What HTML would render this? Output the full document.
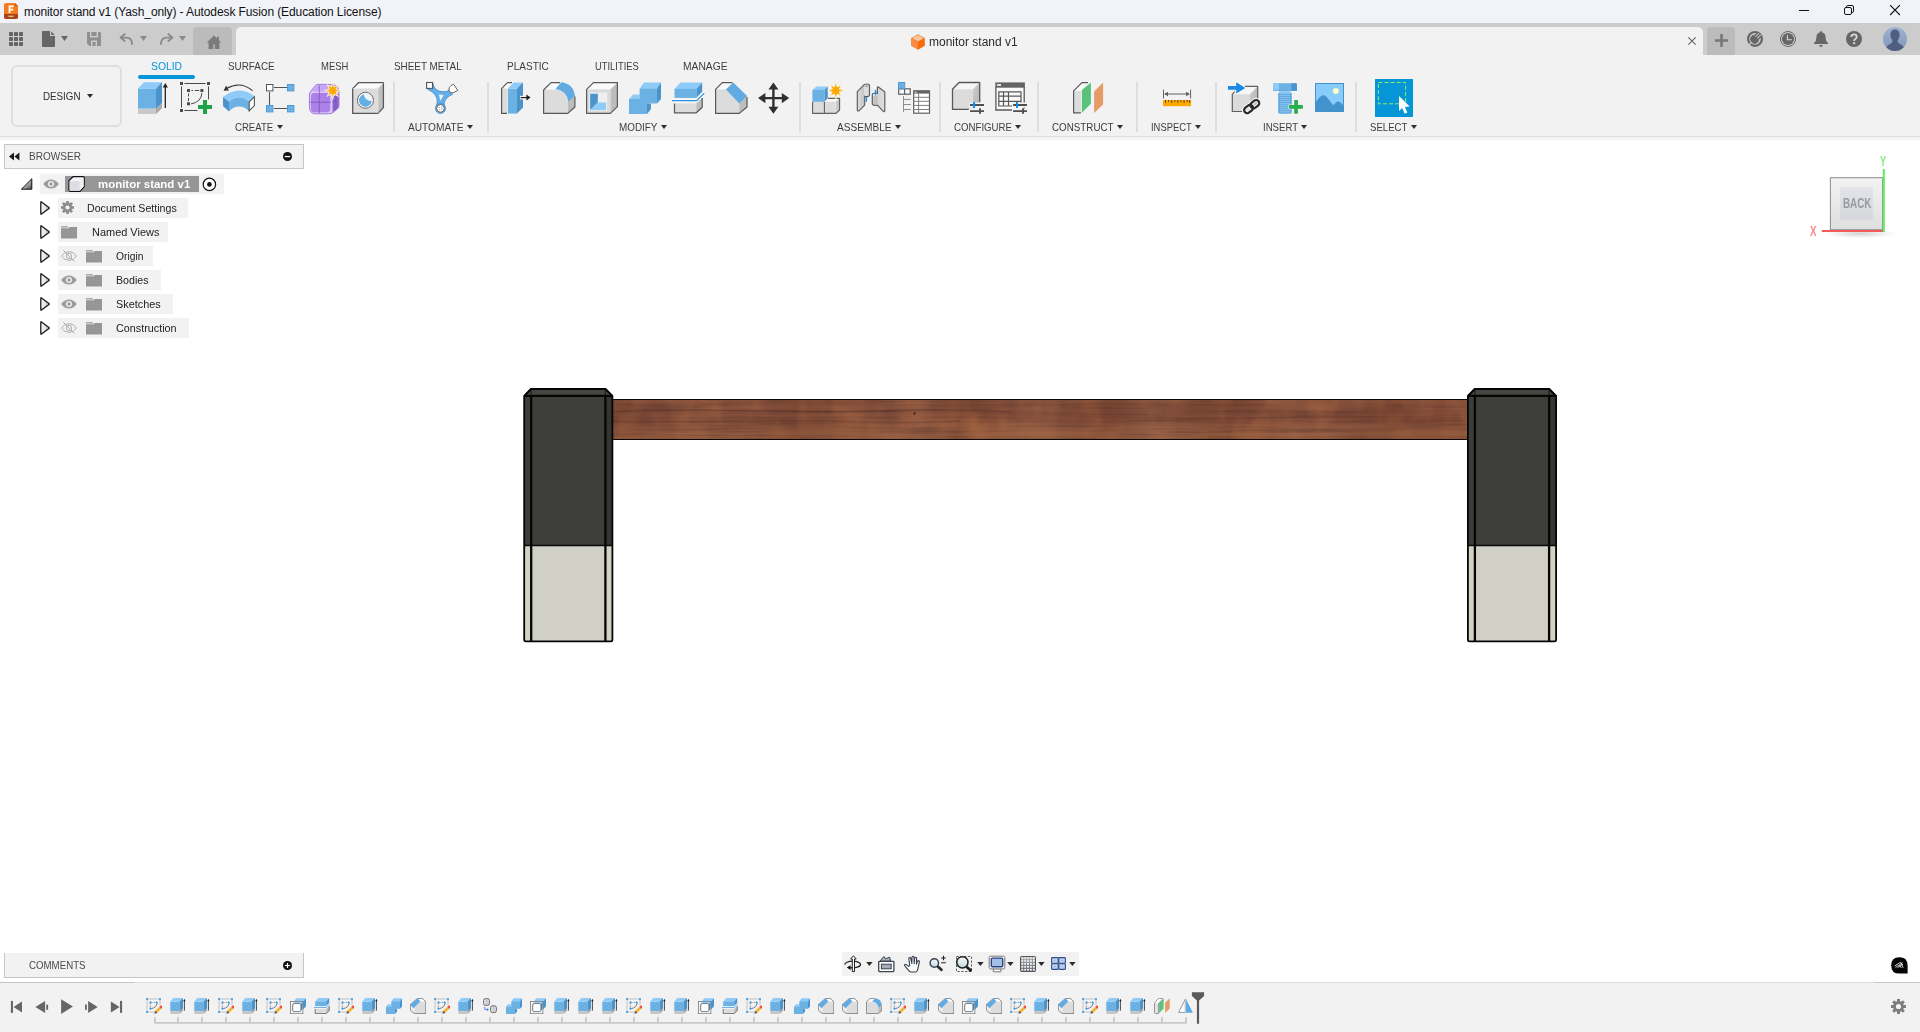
<!DOCTYPE html>
<html lang="en">
<head>
<meta charset="utf-8">
<title>monitor stand v1 - Autodesk Fusion</title>
<style>
*{box-sizing:border-box;margin:0;padding:0}
html,body{width:1920px;height:1032px;overflow:hidden;background:#fff}
body{position:relative;font-family:"Liberation Sans",sans-serif;color:#3c3c3c;-webkit-font-smoothing:antialiased}
.abs{position:absolute}
.t{position:absolute;white-space:nowrap;line-height:1;transform-origin:0 0}
svg{position:absolute;overflow:visible}
#titlebar{left:0;top:0;width:1920px;height:23px;background:#f1f3f9}
#band{left:0;top:23px;width:1920px;height:32px;background:#cccccc}
#toolbar{left:0;top:55px;width:1920px;height:81px;background:#f2f2f2}
#tbline{left:0;top:136px;width:1920px;height:1px;background:#dedede}
#tbsub{left:0;top:137px;width:1920px;height:3px;background:#f5f5f5}
#timeline{left:0;top:983px;width:1920px;height:49px;background:#f2f2f2}
#tlline{left:0;top:982px;width:1920px;height:1px;background:linear-gradient(to right,#c6c6c6 0,#c6c6c6 134px,#dcdcdc 134px,#dcdcdc 1875px,#c6c6c6 1875px)}
.tab{font-size:11px;top:61px;color:#3d3d3d}
.grp{font-size:11px;top:122px;color:#3d3d3d}
.sep{position:absolute;top:82px;width:2px;height:50px;background:#dedede}
.arr{position:absolute;width:0;height:0;border-left:3.2px solid transparent;border-right:3.2px solid transparent;border-top:4px solid #2e2e2e}
.row{position:absolute;height:20px;background:#f2f2f2}
.rt{font-size:11px;color:#2a2a2a}
</style>
</head>
<body>
<!-- window frame -->
<div id="titlebar" class="abs"></div>
<div id="band" class="abs"></div>
<div id="toolbar" class="abs"></div>
<div id="tbline" class="abs"></div>
<div id="tbsub" class="abs"></div>
<div id="tlline" class="abs"></div>
<div id="timeline" class="abs"></div>

<!-- title bar -->
<svg style="left:4px;top:3px" width="14" height="16" viewBox="0 0 14 16">
  <path d="M2 0 H11 L14 3 V14 Q14 16 12 16 H2 Q0 16 0 14 V2 Q0 0 2 0Z" fill="#f47a1c"/>
  <path d="M0 11 H14 V14 Q14 16 12 16 H2 Q0 16 0 14Z" fill="#a4461a"/>
  <path d="M11 0 L14 3 H11Z" fill="#c85a18"/>
  <path d="M4.6 2.6 H9.6 V4.2 H6.4 V5.8 H9.2 V7.4 H6.4 V10 H4.6Z" fill="#fff"/>
  <rect x="4.5" y="12.6" width="5" height="1.5" fill="#e8b48c"/>
</svg>
<div class="t" id="title" style="left:24px;top:6px;font-size:12px;color:#111;letter-spacing:-0.1px">monitor stand v1 (Yash_only) - Autodesk Fusion (Education License)</div>
<!-- window controls -->
<svg style="left:1798px;top:4px" width="110" height="14" viewBox="0 0 110 14">
  <path d="M1 6.5 H11" stroke="#111" stroke-width="1" fill="none"/>
  <rect x="46.5" y="3.5" width="7" height="7" rx="1.5" fill="none" stroke="#111" stroke-width="1"/>
  <path d="M48.5 3.3 V2.8 Q48.5 1.5 49.8 1.5 H54 Q55.5 1.5 55.5 3 V7.2 Q55.5 8.5 54.2 8.5 H53.8" fill="none" stroke="#111" stroke-width="1"/>
  <path d="M92.1 1.2 L101.9 11 M101.9 1.2 L92.1 11" stroke="#111" stroke-width="1.1" fill="none"/>
</svg>
<!-- quick access band -->
<svg style="left:9px;top:32px" width="14" height="14" viewBox="0 0 14 14" fill="#646464">
  <rect x="0" y="0" width="4" height="4" rx=".7"/><rect x="5" y="0" width="4" height="4" rx=".7"/><rect x="10" y="0" width="4" height="4" rx=".7"/>
  <rect x="0" y="5" width="4" height="4" rx=".7"/><rect x="5" y="5" width="4" height="4" rx=".7"/><rect x="10" y="5" width="4" height="4" rx=".7"/>
  <rect x="0" y="10" width="4" height="4" rx=".7"/><rect x="5" y="10" width="4" height="4" rx=".7"/><rect x="10" y="10" width="4" height="4" rx=".7"/>
</svg>
<svg style="left:42px;top:31px" width="13" height="16" viewBox="0 0 13 16">
  <path d="M1 0 H8 V5 H13 V15 Q13 16 12 16 H1 Q0 16 0 15 V1 Q0 0 1 0Z" fill="#666"/>
  <path d="M9.2 0.3 L12.7 3.9 H9.2Z" fill="#666"/>
</svg>
<svg style="left:61px;top:36px" width="7" height="5" viewBox="0 0 7 5"><path d="M0 0 H7 L3.5 5Z" fill="#666"/></svg>
<svg style="left:87px;top:32px" width="14" height="14" viewBox="0 0 14 14">
  <path d="M1 0 H13 Q14 0 14 1 V13 Q14 14 13 14 H2.4 L0 11.6 V1 Q0 0 1 0Z" fill="#909090"/>
  <path d="M3 0 H11 V5.4 H3Z" fill="#ccc"/>
  <rect x="4.4" y="0" width="5.2" height="4" fill="#909090"/>
  <path d="M4 14 V8.6 H10 V14 H8.6 V10 H5.4 V14Z" fill="#ccc"/>
</svg>
<svg style="left:119px;top:33px" width="16" height="13" viewBox="0 0 16 13" fill="none" stroke="#8a8a8a" stroke-width="1.9" stroke-linejoin="round">
  <path d="M6.2 0.8 L1.6 4.6 L6.2 8.4"/>
  <path d="M2 4.6 H7.5 Q13 4.6 13.2 11.8"/>
</svg>
<svg style="left:140px;top:36px" width="7" height="5" viewBox="0 0 7 5"><path d="M0 0 H7 L3.5 5Z" fill="#8a8a8a"/></svg>
<svg style="left:158px;top:33px" width="16" height="13" viewBox="0 0 16 13" fill="none" stroke="#8a8a8a" stroke-width="1.9" stroke-linejoin="round">
  <path d="M9.8 0.8 L14.4 4.6 L9.8 8.4"/>
  <path d="M14 4.6 H8.5 Q3 4.6 2.8 11.8"/>
</svg>
<svg style="left:179px;top:36px" width="7" height="5" viewBox="0 0 7 5"><path d="M0 0 H7 L3.5 5Z" fill="#8a8a8a"/></svg>
<!-- home tab -->
<div class="abs" style="left:193px;top:27px;width:39px;height:28px;background:#bbbbbb;border-radius:4px 4px 0 0"></div>
<svg style="left:206px;top:35px" width="16" height="14" viewBox="0 0 16 14">
  <path d="M8 0.6 L15.2 7.4 H13.4 V14 H2.6 V7.4 H0.8Z" fill="#7b7b7b"/>
  <rect x="11" y="1.6" width="1.8" height="4" fill="#7b7b7b"/>
  <rect x="6.9" y="9.4" width="2.2" height="4.6" fill="#a9a9a9"/>
</svg>
<!-- active document tab -->
<div class="abs" style="left:236px;top:27px;width:1467px;height:28px;background:#f2f2f2;border-radius:5px 5px 0 0"></div>
<svg style="left:911px;top:34px" width="14" height="16" viewBox="0 0 14 16">
  <path d="M7 0.3 L13.8 3.9 V11.7 L7 15.7 L0.2 11.7 V3.9Z" fill="#e07828"/>
  <path d="M7 0.9 L13 4.1 L7 7.5 L1 4.1Z" fill="#ffc49c"/>
  <path d="M0.8 4.6 L6.7 8 V14.9 L0.8 11.4Z" fill="#ff8c3e"/>
  <path d="M13.2 4.6 L7.3 8 V14.9 L13.2 11.4Z" fill="#ff6a06"/>
</svg>
<div class="t" style="left:928.9px;top:35.5px;font-size:12.5px;color:#2c2c2c;transform:scaleX(0.960)">monitor stand v1</div>
<svg style="left:1688px;top:37px" width="8" height="8" viewBox="0 0 8 8"><path d="M0.3 0.3 L7.7 7.7 M7.7 0.3 L0.3 7.7" stroke="#6a6a6a" stroke-width="1.2"/></svg>
<!-- plus tab -->
<div class="abs" style="left:1707px;top:27px;width:28px;height:28px;background:#bbbbbb;border-radius:4px 4px 0 0"></div>
<svg style="left:1715px;top:34px" width="13" height="13" viewBox="0 0 13 13"><path d="M6.5 0 V13 M0 6.5 H13" stroke="#777" stroke-width="2.6"/></svg>
<!-- right icons -->
<svg style="left:1747px;top:31px" width="16" height="16" viewBox="0 0 16 16">
  <circle cx="8" cy="7.9" r="6.9" fill="none" stroke="#666" stroke-width="2.2"/>
  <g transform="translate(8 7.9) rotate(45)">
    <path d="M-4.3 -1.4 H4.3 V1.2 Q4.3 4.6 0 4.9 Q-4.3 4.6 -4.3 1.2Z" fill="#666"/>
    <rect x="-3.2" y="-6.6" width="6.4" height="5.6" fill="#666"/>
    <path d="M-1.2 -7 V-2 M1.2 -7 V-2" stroke="#ccc" stroke-width="0.95"/>
  </g>
  <path d="M4.7 11.3 L1.4 14.6" stroke="#ccc" stroke-width="1.3"/>
</svg>
<svg style="left:1780px;top:31px" width="16" height="16" viewBox="0 0 16 16">
  <circle cx="8" cy="8" r="7.5" fill="none" stroke="#666" stroke-width="1"/>
  <circle cx="8" cy="8" r="6" fill="#666"/>
  <path d="M7.4 4.2 V8.7 H11.8" fill="none" stroke="#dadada" stroke-width="1.1"/>
</svg>
<svg style="left:1814px;top:31px" width="14" height="16" viewBox="0 0 14 16">
  <path d="M7 0 Q8 0 8 1.2 Q11.6 2 11.6 6.4 Q11.6 10.4 14 12 V13 H0 V12 Q2.4 10.4 2.4 6.4 Q2.4 2 6 1.2 Q6 0 7 0Z" fill="#666"/>
  <path d="M5.2 14 H8.8 Q8.4 16 7 16 Q5.6 16 5.2 14Z" fill="#666"/>
</svg>
<svg style="left:1846px;top:31px" width="16" height="16" viewBox="0 0 16 16">
  <circle cx="8" cy="8" r="8" fill="#666"/>
  <path d="M5.3 6 Q5.3 3.4 8 3.4 Q10.7 3.4 10.7 5.8 Q10.7 7.2 9.2 8 Q8.2 8.6 8.2 10" fill="none" stroke="#d8d8d8" stroke-width="1.9"/>
  <rect x="7.2" y="11.2" width="2" height="2" fill="#d8d8d8"/>
</svg>
<svg style="left:1883px;top:27px" width="24" height="24" viewBox="0 0 24 24">
  <defs><clipPath id="avc"><circle cx="12" cy="12" r="12"/></clipPath>
  <linearGradient id="avg" x1="0" y1="0" x2="0" y2="1"><stop offset="0" stop-color="#9fb2d0"/><stop offset="1" stop-color="#8098bc"/></linearGradient></defs>
  <circle cx="12" cy="12" r="12" fill="url(#avg)"/>
  <g clip-path="url(#avc)" fill="#4f607e">
    <path d="M12 2.4 Q16.6 2.4 16.6 8 Q16.6 11.4 14.6 13.2 Q14.4 15.6 16 16.6 Q21 18.4 22 24 H2 Q3 18.4 8 16.6 Q9.6 15.6 9.4 13.2 Q7.4 11.4 7.4 8 Q7.4 2.4 12 2.4Z"/>
  </g>
</svg>
<!-- DESIGN workspace button -->
<div class="abs" style="left:11px;top:65px;width:111px;height:62px;border:2px solid #dedede;border-radius:6px;background:#f2f2f2"></div>
<div class="t" style="left:43.3px;top:90.5px;font-size:11.3px;color:#2e2e2e;transform:scaleX(0.866)">DESIGN</div>
<div class="arr" style="left:86.8px;top:94px"></div>
<!-- tabs -->
<div class="t" style="left:151.3px;top:61.0px;font-size:11px;color:#0696d7;transform:scaleX(0.939)">SOLID</div>
<div class="t" style="left:228.3px;top:61.0px;font-size:11px;color:#3d3d3d;transform:scaleX(0.897)">SURFACE</div>
<div class="t" style="left:321.2px;top:61.0px;font-size:11px;color:#3d3d3d;transform:scaleX(0.862)">MESH</div>
<div class="t" style="left:394.2px;top:61.0px;font-size:11px;color:#3d3d3d;transform:scaleX(0.898)">SHEET METAL</div>
<div class="t" style="left:507.0px;top:61.0px;font-size:11px;color:#3d3d3d;transform:scaleX(0.912)">PLASTIC</div>
<div class="t" style="left:595.0px;top:61.0px;font-size:11px;color:#3d3d3d;transform:scaleX(0.853)">UTILITIES</div>
<div class="t" style="left:683.0px;top:61.0px;font-size:11px;color:#3d3d3d;transform:scaleX(0.935)">MANAGE</div>
<div class="abs" style="left:138px;top:75px;width:57px;height:4px;background:#0696d7;border-radius:2px"></div>
<!-- group labels -->
<div class="t" style="left:234.5px;top:122.0px;font-size:11px;color:#3d3d3d;transform:scaleX(0.872)">CREATE</div>
<div class="arr" style="left:276.5px;top:124.5px"></div>
<div class="t" style="left:408.4px;top:122.0px;font-size:11px;color:#3d3d3d;transform:scaleX(0.923)">AUTOMATE</div>
<div class="arr" style="left:466.5px;top:124.5px"></div>
<div class="t" style="left:619.0px;top:122.0px;font-size:11px;color:#3d3d3d;transform:scaleX(0.898)">MODIFY</div>
<div class="arr" style="left:660.5px;top:124.5px"></div>
<div class="t" style="left:837.0px;top:122.0px;font-size:11px;color:#3d3d3d;transform:scaleX(0.921)">ASSEMBLE</div>
<div class="arr" style="left:894.5px;top:124.5px"></div>
<div class="t" style="left:953.9px;top:122.0px;font-size:11px;color:#3d3d3d;transform:scaleX(0.879)">CONFIGURE</div>
<div class="arr" style="left:1014.5px;top:124.5px"></div>
<div class="t" style="left:1052.3px;top:122.0px;font-size:11px;color:#3d3d3d;transform:scaleX(0.891)">CONSTRUCT</div>
<div class="arr" style="left:1116.5px;top:124.5px"></div>
<div class="t" style="left:1151.3px;top:122.0px;font-size:11px;color:#3d3d3d;transform:scaleX(0.854)">INSPECT</div>
<div class="arr" style="left:1194.5px;top:124.5px"></div>
<div class="t" style="left:1263.3px;top:122.0px;font-size:11px;color:#3d3d3d;transform:scaleX(0.872)">INSERT</div>
<div class="arr" style="left:1300.5px;top:124.5px"></div>
<div class="t" style="left:1370.4px;top:122.0px;font-size:11px;color:#3d3d3d;transform:scaleX(0.874)">SELECT</div>
<div class="arr" style="left:1410.5px;top:124.5px"></div>
<!-- separators -->
<div class="sep" style="left:393px"></div>
<div class="sep" style="left:487px"></div>
<div class="sep" style="left:799px"></div>
<div class="sep" style="left:939px"></div>
<div class="sep" style="left:1037px"></div>
<div class="sep" style="left:1136px"></div>
<div class="sep" style="left:1215px"></div>
<div class="sep" style="left:1355px"></div>
<!-- ===== toolbar icons: CREATE ===== -->
<svg style="left:138px;top:82px" width="32" height="32" viewBox="0 0 32 32">
  <path d="M0 26.5 H18 V32 H0Z" fill="#c9c9c9"/><path d="M18 26.5 L24 21 V26.2 L18 32Z" fill="#a9a9a9"/>
  <path d="M0 6.5 H18 V26.5 H0Z" fill="#6bb1e4"/>
  <path d="M0 6.5 L6 0.3 H24 L18 6.5Z" fill="#8ecbf8"/>
  <path d="M18 6.5 L24 0.3 V21 L18 26.5Z" fill="#4a93cb"/>
  <path d="M27.3 4 V26" stroke="#222" stroke-width="1.3"/><path d="M24.7 5.6 L27.3 1 L29.9 5.6Z" fill="#222"/>
</svg>
<svg style="left:180px;top:82px" width="32" height="32" viewBox="0 0 32 32">
  <g fill="#4a4a4a"><rect x="0" y="0" width="3" height="3"/><rect x="27" y="0" width="3" height="3"/><rect x="0" y="27" width="3" height="3"/>
  <rect x="7" y="7" width="3" height="3"/><rect x="20.4" y="7" width="3" height="3"/><rect x="7" y="20.3" width="3" height="3"/></g>
  <g fill="none" stroke="#4a4a4a" stroke-width="1"><path d="M4.4 1.5 H25.6 M1.5 4.4 V25.6 M28.5 4.4 V17.4 M4.4 28.5 H17.4"/>
  <path d="M11.4 8.5 H13.2 M14.8 8.5 H19.2 M8.5 11.4 V14.4 M8.5 16 V19.2"/>
  <path d="M21.9 11 Q21.2 20.2 11 21.9"/></g>
  <path d="M23 18 H27 V23 H32 V27 H27 V32 H23 V27 H18 V23 H23Z" fill="#1fa347"/>
</svg>
<svg style="left:223px;top:82px" width="33" height="32" viewBox="0 0 33 32">
  <path d="M29.5 8.6 Q17 -1.5 3.5 6.6" fill="none" stroke="#333" stroke-width="1.2"/>
  <path d="M0.6 8.8 L3.2 3.6 L5.8 8.6Z" fill="#333"/>
  <path d="M0 15 Q8 8.4 16 8.4 Q25 8.4 31.6 14.4 L26 19.6 Q21 15.4 16 15.4 Q10.5 15.4 6 19.8Z" fill="#8ecbf8"/>
  <path d="M6 19.8 Q10.5 15.4 16 15.4 Q21 15.4 26 19.6 V29 Q21 24.6 16 24.6 Q10.5 24.6 6 29.6Z" fill="#6bb1e4"/>
  <path d="M0 15 L6 19.8 V29.6 L0 24Z" fill="#4a93cb"/>
  <path d="M26.2 19.8 L31.4 14.8 V23.6 L26.2 28.8Z" fill="#fff" stroke="#555" stroke-width="1.1"/>
</svg>
<svg style="left:266px;top:84px" width="29" height="29" viewBox="0 0 29 29">
  <path d="M8 3.5 H21 M3.5 8 V21 M8 24.5 H21" stroke="#555" stroke-width="1.1" fill="none"/>
  <rect x="0.5" y="0.5" width="6.4" height="6.4" fill="#fff" stroke="#555" stroke-width="1"/>
  <rect x="21.5" y="0.5" width="6.4" height="6.4" fill="#6bb1e4" stroke="#4f9ad4" stroke-width="1"/>
  <rect x="0.5" y="21.5" width="6.4" height="6.4" fill="#6bb1e4" stroke="#4f9ad4" stroke-width="1"/>
  <rect x="21.5" y="21.5" width="6.4" height="6.4" fill="#6bb1e4" stroke="#4f9ad4" stroke-width="1"/>
</svg>
<svg style="left:309px;top:82px" width="32" height="32" viewBox="0 0 32 32">
  <path d="M8.2 2.4 H22 Q30 2.4 30 10 V24 Q30 25.6 28.8 26.6 L24 30.6 Q22.4 31.8 20 31.8 H7 Q0.4 31.8 0.4 25 V13 Q0.4 10.6 2 9 L6 4 Q7 2.4 8.2 2.4Z" fill="#d9c6f8" stroke="#9a70d8" stroke-width="0.9"/>
  <path d="M3 8.6 L6.6 4.4 Q7.4 3.2 9 3.2 H22 Q28 3.2 29 8 L23 12 Q21.6 9.6 18 9.6 H6 Q4 9.6 3 8.6Z" fill="#c8a4fb"/>
  <path d="M23.6 15 L29.6 11.6 V24 Q29.6 25.4 28.6 26.2 L23.6 30.2Z" fill="#8a62cc"/>
  <rect x="2" y="11" width="19.2" height="19.2" rx="3.4" fill="#ab80e8"/>
  <path d="M10.3 3.4 V31.4 M0.8 20.2 H21.6 M23.6 20.2 L29.6 17.4 M26.8 13.4 V27.6" fill="none" stroke="#7a58b0" stroke-width="0.8"/>
  <path d="M23.7 -0.2 L25 5 L29.2 2.6 L27 7.1 L32 8.5 L27 9.9 L29.2 14.4 L25 12 L23.7 17.2 L22.4 12 L18.2 14.4 L20.4 9.9 L15.4 8.5 L20.4 7.1 L18.2 2.6 L22.4 5Z" fill="#ffa900" stroke="#f6f2ec" stroke-width="0.9" stroke-linejoin="round"/>
</svg>
<svg style="left:352px;top:82px" width="32" height="32" viewBox="0 0 32 32">
  <defs><clipPath id="hcl"><circle cx="13.45" cy="18.3" r="6.6"/></clipPath></defs>
  <path d="M0.7 6.6 L6.4 0.7 H31.4 L26 6.6Z" fill="#fafafa"/>
  <path d="M26 6.6 L31.4 0.7 V25.6 L26 31.4Z" fill="#c0c0c0"/>
  <path d="M0.7 6.6 H26 V31.4 H0.7Z" fill="#dcdcdc"/>
  <path d="M0.7 6.6 L6.4 0.7 H31.4 V25.6 L26 31.4 H0.7Z" fill="none" stroke="#585858" stroke-width="1.3" stroke-linejoin="round"/>
  <path d="M26 31.4 V6.6 H0.7 M26 6.6 L31.4 0.7" fill="none" stroke="#e9e9e9" stroke-width="0.6"/>
  <circle cx="13.45" cy="18.3" r="8" fill="#fff" stroke="#666" stroke-width="1"/>
  <g clip-path="url(#hcl)"><circle cx="13.45" cy="18.3" r="6.6" fill="#62aee6"/><circle cx="19" cy="11.5" r="7.4" fill="#f4f4f4"/></g>
</svg>
<!-- AUTOMATE -->
<svg style="left:426px;top:82px" width="33" height="32" viewBox="0 0 33 32">
  <path d="M1.6 7.2 L7 1.6 Q8.4 9.6 17.3 9.8 Q20.5 9.8 23 8.4 L26.6 12.3 Q20 14.8 18 21 L18.4 23 H10.6 L11.2 21 Q12.4 12 1.6 7.2Z" fill="#64b0ea" stroke="#4690ce" stroke-width="0.9" stroke-linejoin="round"/>
  <path d="M12.8 12.4 L17.7 13 L14.5 18.8Z" fill="#f2f2f2"/>
  <circle cx="14.5" cy="26.4" r="5.1" fill="#64b0ea" stroke="#4690ce" stroke-width="0.8"/>
  <circle cx="14.5" cy="26.4" r="3.9" fill="#fff" stroke="#5a5a5a" stroke-width="1"/>
  <circle cx="14.5" cy="26.4" r="1.7" fill="none" stroke="#777" stroke-width="0.7" stroke-dasharray="1.6 1"/>
  <rect x="0.6" y="0.5" width="5.9" height="5.9" fill="#fff" stroke="#555" stroke-width="1.1"/>
  <path d="M27.5 2.2 L31.8 8.4 L26.8 10.9 Q24 11.4 23 8.4 Q22.4 5.4 25 3.6Z" fill="#fff" stroke="#555" stroke-width="0.9" stroke-linejoin="round"/>
</svg>
<!-- ===== MODIFY ===== -->
<svg style="left:501px;top:82px" width="32" height="32" viewBox="0 0 32 32">
  <path d="M0.6 6.6 L6.4 0.6 H12 L6.6 6.6Z" fill="#fafafa"/>
  <path d="M0.6 6.6 H6.6 V31.4 H0.6Z" fill="#dcdcdc"/>
  <path d="M6 31.4 H0.6 V6.6 L6.4 0.6 H11" fill="none" stroke="#585858" stroke-width="1.2" stroke-linejoin="round"/>
  <path d="M7 6.6 H16 V31.6 H7Z" fill="#6bb1e4"/>
  <path d="M7 6.6 L12.6 0.4 H22 L16 6.6Z" fill="#8ecbf8"/>
  <path d="M16 6.6 L22 0.4 V25.4 L16 31.6Z" fill="#4a93cb"/>
  <path d="M19 13.8 H27 V17.4 H19Z" fill="#f2f2f2"/>
  <path d="M19.6 15.6 H27" stroke="#222" stroke-width="1.2"/><path d="M25.4 12.6 L29.6 15.6 L25.4 18.6Z" fill="#222"/>
</svg>
<svg style="left:543px;top:82px" width="33" height="32" viewBox="0 0 33 32">
  <path d="M0.6 8 L8 0.6 H18.3 L12.4 7.4 H0.6Z" fill="#fafafa"/>
  <path d="M0.6 7.8 H12.4 Q23.6 9 24.8 19.8 V31.4 H0.6Z" fill="#dcdcdc"/>
  <path d="M24.8 19.8 L31.9 13.9 V25 L24.8 31.4Z" fill="#bdbdbd"/>
  <path d="M12.4 7 L18.3 0.3 Q30.6 1.8 31.9 13.9 L25.2 19.8 Q24 8.6 12.4 7Z" fill="#62aae2"/>
  <path d="M17 0.6 H8 L0.6 8 V31.4 H24.8 L31.9 25 V14.6" fill="none" stroke="#585858" stroke-width="1.2" stroke-linejoin="round"/>
</svg>
<svg style="left:586px;top:82px" width="32" height="32" viewBox="0 0 32 32">
  <path d="M0.6 7.4 L7.4 0.6 H31.4 L24.4 7.4Z" fill="#fafafa"/>
  <path d="M24.4 7.4 L31.4 0.6 V24.6 L24.4 31.4Z" fill="#bdbdbd"/>
  <path d="M0.6 7.4 H24.4 V31.4 H0.6Z" fill="#dadada"/>
  <path d="M0.6 7.4 L7.4 0.6 H31.4 V24.6 L24.4 31.4 H0.6Z" fill="none" stroke="#585858" stroke-width="1.2" stroke-linejoin="round"/>
  <path d="M3.4 10.4 H21.2 V28.6 H3.4Z" fill="#efefef"/>
  <path d="M4.2 11.8 H11.8 V20.4 L4.2 28Z" fill="#4a93cb"/>
  <path d="M4.2 28 L11.8 20.4 H20 V28Z" fill="#8ecbf8"/>
</svg>
<svg style="left:629px;top:82px" width="32" height="32" viewBox="0 0 32 32">
  <path d="M10.6 6.8 L15 0.4 H32 L28 6.8Z" fill="#8ecbf8"/>
  <path d="M28 6.6 L32 0.4 V17 L28 21.6Z" fill="#4a93cb"/>
  <path d="M0 17.2 L4 12.4 H10.8 V17.2Z" fill="#8ecbf8"/>
  <path d="M18 21.4 H22 V27 L18 32Z" fill="#4a93cb"/>
  <path d="M0 17 H10.6 V6.6 H28 V21.6 H18 V32 H0Z" fill="#6bb1e4"/>
</svg>
<svg style="left:672px;top:82px" width="33" height="32" viewBox="0 0 33 32">
  <path d="M2.5 21.4 H24.3 V30.8 H2.5Z" fill="#dcdcdc"/>
  <path d="M24.3 21.4 L30.2 15.4 V25.2 L24.3 30.8Z" fill="#bdbdbd"/>
  <path d="M2.5 21.4 V30.8 H24.3 L30.2 25.2 V16" fill="none" stroke="#585858" stroke-width="1.2" stroke-linejoin="round"/>
  <path d="M0.4 17 H24.6 L32 9.6 V13 L25 20.2 H0.4Z" fill="#fbfbfb"/>
  <path d="M2.5 6.9 L8.4 0.4 H30.2 L24.3 6.9Z" fill="#8ecbf8"/>
  <path d="M24.3 6.9 L30.2 0.4 V9.6 L24.3 15.9Z" fill="#4a93cb"/>
  <path d="M2.5 6.9 H24.3 V15.9 H2.5Z" fill="#6bb1e4"/>
  <path d="M0 18.6 H24.8 L32.2 11.2" fill="none" stroke="#2990e6" stroke-width="1.2"/>
</svg>
<svg style="left:715px;top:82px" width="33" height="32" viewBox="0 0 33 32">
  <path d="M0.6 7.4 L7.2 0.6 H18.3 L10.9 7.4Z" fill="#fafafa"/>
  <path d="M0.6 7.4 H10.9 L24.3 21.3 V31.4 H0.6Z" fill="#dcdcdc"/>
  <path d="M24.3 21.3 L32 14.1 V25 L24.3 31.4Z" fill="#bdbdbd"/>
  <path d="M10.9 7.4 L18.3 0.4 L32.1 14.1 L24.3 21.4Z" fill="#62aae2"/>
  <path d="M17.4 0.6 H7.2 L0.6 7.4 V31.4 H24.3 L32 25 V15" fill="none" stroke="#585858" stroke-width="1.2" stroke-linejoin="round"/>
</svg>
<svg style="left:758px;top:82px" width="32" height="32" viewBox="0 0 32 32" fill="#303030">
  <path d="M15.4 6 V26.4 M5.6 16.1 H25.6" stroke="#303030" stroke-width="2.4"/>
  <path d="M15.4 0.4 L20.4 7.4 H10.4Z M15.4 31.8 L20.4 24.8 H10.4Z M0 16.1 L7.4 11 V21.2Z M31.2 16.1 L23.8 11 V21.2Z"/>
</svg>
<!-- ===== ASSEMBLE ===== -->
<svg style="left:812px;top:82px" width="33" height="32" viewBox="0 0 33 32">
  <path d="M12.4 19.8 L16 16.4 H27.6 L24 19.8Z" fill="#fafafa"/>
  <path d="M24 19.8 L27.6 16.4 V28 L24 31.4Z" fill="#c2c2c2"/>
  <path d="M0.6 19.8 H24 V31.4 H0.6Z" fill="#dcdcdc"/>
  <path d="M24 20.4 V30.8" stroke="#ececec" stroke-width="0.7"/>
  <path d="M0.6 19.8 V31.4 H24 L27.6 28 V16.4 H16 M12.4 19.8 V31.4" fill="none" stroke="#606060" stroke-width="1.1" stroke-linejoin="round"/>
  <path d="M0.4 7.9 L4.4 4.4 H15.8 L12.4 7.9Z" fill="#8ecbf8"/>
  <path d="M12.4 7.9 L15.8 4.4 V16 L12.4 19.8Z" fill="#4a93cb"/>
  <path d="M0.4 7.9 H12.4 V19.8 H0.4Z" fill="#6bb1e4"/>
  <path d="M23.8 0 L25.2 5 L29.5 2.7 L27.2 7.1 L32.2 8.5 L27.2 9.9 L29.5 14.3 L25.2 12 L23.8 17 L22.4 12 L18.1 14.3 L20.4 9.9 L15.4 8.5 L20.4 7.1 L18.1 2.7 L22.4 5Z" fill="#ffa900" stroke="#f6f2ec" stroke-width="0.8" stroke-linejoin="round"/>
</svg>
<svg style="left:856px;top:83px" width="30" height="30" viewBox="0 0 30 30">
  <defs><linearGradient id="jg1" x1="0" y1="0" x2="1" y2="0"><stop offset="0" stop-color="#dedede"/><stop offset="0.55" stop-color="#c4c4c4"/><stop offset="0.6" stop-color="#e2e2e2"/><stop offset="1" stop-color="#dadada"/></linearGradient>
  <linearGradient id="jg2" x1="0" y1="0" x2="1" y2="0"><stop offset="0" stop-color="#cacaca"/><stop offset="0.4" stop-color="#bdbdbd"/><stop offset="0.44" stop-color="#d4d4d4"/><stop offset="1" stop-color="#e0e0e0"/></linearGradient></defs>
  <path d="M1.3 27 V8.6 L8 1.8 Q9 1 10.8 1 Q13.5 1 13.5 2.8 V12 Q13.5 13.4 11 13.6 Q9.4 13.7 8.7 13.2 V22.1 L3 27.8 Q1.3 28.6 1.3 27Z" fill="url(#jg1)" stroke="#606060" stroke-width="1.2" stroke-linejoin="round"/>
  <ellipse cx="10.6" cy="3.2" rx="1.6" ry="0.7" fill="#9a9a9a"/>
  <path d="M10.4 14 V18.8" stroke="#1e90ea" stroke-width="1.4"/>
  <path d="M21.4 4.2 Q21.6 3.4 22.4 4 L28.8 9 V27.6 Q28.6 29 27.4 28.4 L21.6 22.3 Q19 22.8 17.2 22 Q16.3 21.6 16.3 20.8 V11.6 Q16.6 10.2 19.4 10.2 Q20.8 10.2 21.4 10.6Z" fill="url(#jg2)" stroke="#606060" stroke-width="1.2" stroke-linejoin="round"/>
  <ellipse cx="19.2" cy="11.9" rx="2.4" ry="1.1" fill="#f2f2f2"/>
  <path d="M19.5 6.8 V12.6" stroke="#1e90ea" stroke-width="1.4"/>
</svg>
<svg style="left:898px;top:82px" width="33" height="32" viewBox="0 0 33 32">
  <path d="M5.5 14.2 V29.8 M5.5 17.4 H12.8 M5.5 22.5 H12.8 M5.5 27.5 H12.8" fill="none" stroke="#8c8c8c" stroke-width="1"/>
  <rect x="0.7" y="6.8" width="5.9" height="5.4" fill="#f8f8f8" stroke="#606060" stroke-width="1.2"/>
  <rect x="6.6" y="6.8" width="5.6" height="5.4" fill="#f8f8f8" stroke="#606060" stroke-width="1.2"/>
  <rect x="0.5" y="0.5" width="6.2" height="6.2" fill="#6bb1e4" stroke="#4f9ad4" stroke-width="1"/>
  <rect x="15.7" y="8.8" width="15.8" height="22.4" fill="#fff" stroke="#606060" stroke-width="1.2"/>
  <rect x="15.7" y="8.8" width="15.8" height="2.8" fill="#646464"/>
  <rect x="16.6" y="9.8" width="2" height="0.9" fill="#eee"/>
  <path d="M15.7 15.3 H31.5 M15.7 19.3 H31.5 M15.7 23.4 H31.5 M15.7 27.5 H31.5 M20.6 11.6 V31.2" fill="none" stroke="#808080" stroke-width="1"/>
</svg>
<!-- ===== CONFIGURE ===== -->
<svg style="left:952px;top:82px" width="33" height="32" viewBox="0 0 33 32">
  <defs><linearGradient id="sg1" x1="0" y1="0" x2="1" y2="1"><stop offset="0" stop-color="#cfcfcf"/><stop offset="1" stop-color="#b2b2b2"/></linearGradient></defs>
  <path d="M0.5 7.3 L7 0.5 H27.7 L21 7.3Z" fill="#f6f6f6"/>
  <path d="M21 7.3 L27.7 0.5 V21 L21 27.4Z" fill="url(#sg1)"/>
  <path d="M0.5 7.3 H21 V27.4 H0.5Z" fill="#dbdbdb"/>
  <path d="M16.8 27.4 H0.5 V7.3 L7 0.5 H27.7 V20.2" fill="none" stroke="#585858" stroke-width="1.3" stroke-linejoin="round"/>
  <path d="M17.2 20.6 H32.6 V25.4 H17.2Z M17.2 26.6 H32.6 V31.6 H17.2Z" fill="#f2f2f2"/>
  <path d="M18 23 H32 M18 29.1 H32" stroke="#505050" stroke-width="1.8"/>
  <rect x="21" y="20.1" width="2.1" height="5.8" fill="#0a8ef0"/>
  <rect x="27.1" y="26.3" width="1.9" height="5.5" fill="#505050"/>
</svg>
<svg style="left:995px;top:82px" width="33" height="32" viewBox="0 0 33 32">
  <rect x="0.6" y="0.6" width="29" height="28" fill="#fafafa"/>
  <rect x="0.3" y="0.4" width="29.6" height="5.3" fill="#646464"/>
  <rect x="2.1" y="2.2" width="3.9" height="1.6" fill="#fff"/>
  <path d="M0.9 5 V28 H29.2 V5" fill="none" stroke="#585858" stroke-width="1.3"/>
  <path d="M3.8 9.9 H26 V24 H3.8Z M8.5 9.9 V24 M13.5 9.9 V24 M3.8 14.2 H26 M3.8 19.4 H26" fill="none" stroke="#585858" stroke-width="1.2"/>
  <path d="M17 20.4 H32.6 V25.6 H17Z M17 26.4 H32.6 V32 H17Z" fill="#f2f2f2"/>
  <path d="M18.1 23 H32 M18.1 29.1 H32" stroke="#505050" stroke-width="1.8"/>
  <rect x="21" y="20.1" width="2" height="5.8" fill="#0a8ef0"/>
  <rect x="27.1" y="26.3" width="1.9" height="5.5" fill="#505050"/>
</svg>
<!-- ===== CONSTRUCT ===== -->
<svg style="left:1073px;top:82px" width="31" height="32" viewBox="0 0 31 32">
  <path d="M0.6 8.9 L9 0.6 H16 L7.9 8.9Z" fill="#fafafa"/>
  <path d="M0.6 8.9 H7.9 V30.8 H0.6Z" fill="#dcdcdc"/>
  <path d="M15 0.6 H9 L0.6 8.9 V30.8 H7.9" fill="none" stroke="#585858" stroke-width="1.2" stroke-linejoin="round"/>
  <path d="M8.9 7.9 L17.9 0.4 V21.8 L8.9 30.8Z" fill="#5bc27c"/>
  <path d="M21.1 9.4 L30.1 0.4 V22.4 L21.1 31Z" fill="#e69a66"/>
</svg>
<!-- ===== INSPECT ===== -->
<svg style="left:1163px;top:89px" width="29" height="18" viewBox="0 0 29 18">
  <path d="M0.5 0.6 V9.4 M27.6 0.6 V9.4 M2 5 H26" fill="none" stroke="#606060" stroke-width="1"/>
  <path d="M1.2 5 L5 2.8 V7.2Z M26.9 5 L23.1 2.8 V7.2Z" fill="#606060"/>
  <rect x="0" y="11" width="28.1" height="6.2" fill="#ffa800"/>
  <path d="M2.5 11 V14 M5.6 11 V13 M8.7 11 V14 M11.8 11 V13 M14.9 11 V14 M18 11 V13 M21.1 11 V14 M24.2 11 V13 M26.6 11 V14" stroke="#5a3e0c" stroke-width="0.9" fill="none"/>
</svg>
<!-- ===== INSERT ===== -->
<svg style="left:1228px;top:82px" width="33" height="33" viewBox="0 0 33 33">
  <defs><linearGradient id="sg2" x1="0" y1="0" x2="1" y2="1"><stop offset="0" stop-color="#cccccc"/><stop offset="1" stop-color="#b0b0b0"/></linearGradient></defs>
  <path d="M4.3 12.3 L11.6 4.3 H29.7 L22 12.3Z" fill="#f6f6f6"/>
  <path d="M22 12.3 L29.7 4.3 V22 L22 29.5Z" fill="url(#sg2)"/>
  <path d="M4.3 12.3 H22 V29.5 H4.3Z" fill="#dbdbdb"/>
  <path d="M16 29.5 H4.3 V12.3 L6.8 9.6 M17 4.3 H29.7 V16.6" fill="none" stroke="#606060" stroke-width="1.2" stroke-linejoin="round"/>
  <path d="M0 4.1 H8.2 V0.2 L17.4 5.9 L8.2 11.6 V7.8 H0Z" fill="#1a8ae6"/>
  <g fill="none" stroke="#f2f2f2" stroke-width="4.4"><rect x="-4.8" y="-3.1" width="9.6" height="6.2" rx="3.1" transform="translate(20.6 27) rotate(-38)"/><rect x="-4.8" y="-3.1" width="9.6" height="6.2" rx="3.1" transform="translate(26.8 22.2) rotate(-38)"/></g>
  <g fill="none" stroke="#2a2a2a" stroke-width="2.2"><rect x="-4.8" y="-3.1" width="9.6" height="6.2" rx="3.1" transform="translate(20.6 27) rotate(-38)"/><rect x="-4.8" y="-3.1" width="9.6" height="6.2" rx="3.1" transform="translate(26.8 22.2) rotate(-38)"/></g>
  
</svg>
<svg style="left:1273px;top:83px" width="31" height="32" viewBox="0 0 31 32">
  <defs><pattern id="thr" x="0" y="10" width="4" height="1.97" patternUnits="userSpaceOnUse"><rect width="4" height="1.97" fill="#63a9de"/><rect y="0" width="4" height="0.9" fill="#8cc6f2"/></pattern></defs>
  <path d="M6 7.6 H17.8 V10 H6Z" fill="#8ecbf8"/>
  <path d="M5.1 10 H18.9 V29.6 L16.8 31 H7.4 L5.1 29.6Z" fill="url(#thr)"/>
  <path d="M6.2 10 V30.4 M17.6 10 V30.4" stroke="#5aa0d8" stroke-width="1.4" opacity="0.55"/>
  <path d="M1.4 0.3 H22.6 Q23.9 0.3 23.9 1.6 V7.7 H0.1 V1.6 Q0.1 0.3 1.4 0.3Z" fill="#6bb1e4"/>
  <path d="M1.4 0.3 H6 V7.7 H0.1 V1.6 Q0.1 0.3 1.4 0.3Z" fill="#8ecbf8"/>
  <path d="M18.4 0.3 H22.6 Q23.9 0.3 23.9 1.6 V7.7 H18.4Z" fill="#4a93cb"/>
  <path d="M0.1 6.8 H23.9 V7.7 H0.1Z" fill="#4a93cb" opacity="0.5"/>
  <path d="M15.4 16.4 H30.6 V31.6 H15.4Z" fill="#f2f2f2" opacity="0"/>
  <path d="M21.2 17 H24.9 V22 H29.9 V25.7 H24.9 V30.8 H21.2 V25.7 H16.1 V22 H21.2Z" fill="#24b04c" stroke="#f2f2f2" stroke-width="1.2" paint-order="stroke"/>
</svg>
<svg style="left:1315px;top:83px" width="29" height="29" viewBox="0 0 29 29">
  <rect x="0.5" y="0.5" width="28" height="28" fill="#88ccfc" stroke="#4292cc" stroke-width="1"/>
  <path d="M0.5 19.6 C3 16 5.6 12.2 8.4 12.2 C11.6 12.2 14.4 18 18.4 22.2 C20.4 20 21.6 18.4 23.3 18.4 C25.2 18.4 27 20.6 28.5 23 V28.5 H0.5Z" fill="#4292cc"/>
  <circle cx="20.9" cy="8" r="3.3" fill="#ffffc6" stroke="#7cc0f4" stroke-width="0.5"/>
</svg>
<!-- ===== SELECT ===== -->
<svg style="left:1375px;top:79px" width="38" height="38" viewBox="0 0 38 38">
  <rect x="0" y="0" width="38" height="38" fill="#0696d7"/>
  <rect x="3.4" y="3.5" width="27.2" height="21.3" fill="none" stroke="#8fee6e" stroke-width="1" stroke-dasharray="4 2.1" stroke-dashoffset="0"/>
  <path d="M24 17 V32 L27.2 29 L29.6 34.8 L32.4 33.5 L29.9 28 L34.7 27.5Z" fill="#fff"/>
</svg>
<!-- ===== BROWSER ===== -->
<svg width="0" height="0" style="position:absolute"><defs>
  <linearGradient id="tg" x1="0" y1="0" x2="1" y2="0"><stop offset="0" stop-color="#fafafa"/><stop offset="0.5" stop-color="#e2e3e7"/><stop offset="1" stop-color="#b4b6bc"/></linearGradient>
  <linearGradient id="tg2" x1="0" y1="0" x2="1" y2="1"><stop offset="0.2" stop-color="#f4f4f4"/><stop offset="1" stop-color="#4a4a4a"/></linearGradient>
  <symbol id="i-exp" viewBox="0 0 10 14"><path d="M0.8 1.2 Q0.8 0.6 1.4 0.9 L9 6.6 Q9.4 7 9 7.4 L1.4 13.1 Q0.8 13.4 0.8 12.8Z" fill="url(#tg)" stroke="#1a1a1a" stroke-width="1.3" stroke-linejoin="round"/></symbol>
  <symbol id="i-eye" viewBox="0 0 16 10"><path d="M0.2 5 Q3.4 0.4 8 0.4 Q12.6 0.4 15.8 5 Q12.6 9.6 8 9.6 Q3.4 9.6 0.2 5Z" fill="#9c9c9c"/><circle cx="8" cy="5" r="3" fill="#f2f2f2"/><circle cx="8" cy="5" r="1.7" fill="#9c9c9c"/></symbol>
  <symbol id="i-eyeoff" viewBox="0 0 16 12"><path d="M0.5 6 Q3.6 1.6 8 1.6 Q12.4 1.6 15.5 6 Q12.4 10.4 8 10.4 Q3.6 10.4 0.5 6Z" fill="none" stroke="#a6a6a6" stroke-width="0.9"/><circle cx="8" cy="6" r="2.6" fill="none" stroke="#a6a6a6" stroke-width="0.9"/><path d="M2.4 0.4 L13.6 11.6" stroke="#a6a6a6" stroke-width="0.9"/></symbol>
  <symbol id="i-folder" viewBox="0 0 16 13"><path d="M0 0.2 H6.6 L7.4 1.4 H0Z" fill="#969696"/><path d="M0 2.2 H7.6 L8.6 1 H16 V12.6 H0Z" fill="#969696"/></symbol>
</defs></svg>
<div class="abs" style="left:4px;top:144px;width:300px;height:25px;background:#f2f2f2;border:1px solid #c6c6c6"></div>
<svg style="left:9px;top:152px" width="11" height="9" viewBox="0 0 11 9"><path d="M0 4.5 L5 0.6 V8.4Z M5.4 4.5 L10.4 0.6 V8.4Z" fill="#1a1a1a"/></svg>
<div class="t" style="left:29.1px;top:150.6px;font-size:11px;color:#4a4a4a;transform:scaleX(0.913)">BROWSER</div>
<svg style="left:283px;top:152px" width="9" height="9" viewBox="0 0 9 9"><circle cx="4.5" cy="4.5" r="4.5" fill="#111"/><rect x="1.8" y="3.9" width="5.4" height="1.3" fill="#fff"/></svg>
<svg style="left:20px;top:178px" width="13" height="12" viewBox="0 0 13 12"><path d="M1.4 11.2 H11.8 V0.8Z" fill="url(#tg2)" stroke="#111" stroke-width="1" stroke-linejoin="round"/></svg>
<div class="row" style="left:40px;top:174px;width:184px"></div>
<svg style="left:43px;top:179px" width="16" height="10"><use href="#i-eye"/></svg>
<div class="abs" style="left:65px;top:176px;width:134px;height:16px;background:#969696"></div>
<svg style="left:67.5px;top:176px" width="17" height="16" viewBox="0 0 17 16">
  <path d="M1 4.6 L5 0.7 H15 Q16.2 0.7 16.2 1.9 V10.6 L12 15.3 H2.2 Q1 15.3 1 14.1Z" fill="#f6f6f8" stroke="#111" stroke-width="1.2" stroke-linejoin="round"/>
  <path d="M1.6 5 H11.6 V14.7 H1.6Z" fill="#dcdee4"/>
  <path d="M12 5 L15.6 1.4 V10.4 L12 14.6Z" fill="#eceef2"/>
</svg>
<div class="t" style="left:98.2px;top:178.5px;font-size:11px;color:#ffffff;transform:scaleX(1.041);font-weight:bold">monitor stand v1</div>
<svg style="left:202px;top:177px" width="15" height="15" viewBox="0 0 15 15"><circle cx="7.4" cy="7.4" r="6.2" fill="#fff" stroke="#111" stroke-width="1.2"/><circle cx="7.4" cy="7.4" r="2.3" fill="#111"/></svg>
<svg style="left:40px;top:201.4px" width="10" height="14"><use href="#i-exp"/></svg>
<div class="row" style="left:58px;top:198px;width:130px"></div>
<svg style="left:61px;top:201.2px" width="13" height="13" viewBox="-6.5 -6.5 13 13"><g fill="#8c8c8c"><circle r="4.7"/><rect x="-1.35" y="-6.5" width="2.7" height="3" transform="rotate(0)"/><rect x="-1.35" y="-6.5" width="2.7" height="3" transform="rotate(45)"/><rect x="-1.35" y="-6.5" width="2.7" height="3" transform="rotate(90)"/><rect x="-1.35" y="-6.5" width="2.7" height="3" transform="rotate(135)"/><rect x="-1.35" y="-6.5" width="2.7" height="3" transform="rotate(180)"/><rect x="-1.35" y="-6.5" width="2.7" height="3" transform="rotate(225)"/><rect x="-1.35" y="-6.5" width="2.7" height="3" transform="rotate(270)"/><rect x="-1.35" y="-6.5" width="2.7" height="3" transform="rotate(315)"/></g><circle r="2.1" fill="#f2f2f2"/></svg>
<div class="t" style="left:87.0px;top:202.6px;font-size:11px;color:#222;transform:scaleX(0.965)">Document Settings</div>
<svg style="left:40px;top:225.4px" width="10" height="14"><use href="#i-exp"/></svg>
<div class="row" style="left:58px;top:222px;width:110px"></div>
<svg style="left:61px;top:225.6px" width="16" height="13"><use href="#i-folder"/></svg>
<div class="t" style="left:91.6px;top:226.6px;font-size:11px;color:#222;transform:scaleX(0.996)">Named Views</div>
<svg style="left:40px;top:249.4px" width="10" height="14"><use href="#i-exp"/></svg>
<div class="row" style="left:58px;top:246px;width:95px"></div>
<svg style="left:61px;top:250px" width="16" height="12"><use href="#i-eyeoff"/></svg>
<svg style="left:86px;top:249.6px" width="16" height="13"><use href="#i-folder"/></svg>
<div class="t" style="left:116.2px;top:250.6px;font-size:11px;color:#222;transform:scaleX(0.934)">Origin</div>
<svg style="left:40px;top:273.4px" width="10" height="14"><use href="#i-exp"/></svg>
<div class="row" style="left:58px;top:270px;width:103px"></div>
<svg style="left:61px;top:275px" width="16" height="10"><use href="#i-eye"/></svg>
<svg style="left:86px;top:273.6px" width="16" height="13"><use href="#i-folder"/></svg>
<div class="t" style="left:116.2px;top:274.6px;font-size:11px;color:#222;transform:scaleX(0.966)">Bodies</div>
<svg style="left:40px;top:297.4px" width="10" height="14"><use href="#i-exp"/></svg>
<div class="row" style="left:58px;top:294px;width:115px"></div>
<svg style="left:61px;top:299px" width="16" height="10"><use href="#i-eye"/></svg>
<svg style="left:86px;top:297.6px" width="16" height="13"><use href="#i-folder"/></svg>
<div class="t" style="left:116.2px;top:298.6px;font-size:11px;color:#222;transform:scaleX(0.986)">Sketches</div>
<svg style="left:40px;top:321.4px" width="10" height="14"><use href="#i-exp"/></svg>
<div class="row" style="left:58px;top:318px;width:131px"></div>
<svg style="left:61px;top:322px" width="16" height="12"><use href="#i-eyeoff"/></svg>
<svg style="left:86px;top:321.6px" width="16" height="13"><use href="#i-folder"/></svg>
<div class="t" style="left:116.2px;top:322.6px;font-size:11px;color:#222;transform:scaleX(0.981)">Construction</div>
<!-- ===== COMMENTS ===== -->
<div class="abs" style="left:4px;top:953px;width:300px;height:25px;background:#f2f2f2;border:1px solid #c6c6c6;border-top:none"></div>
<div class="t" style="left:29.3px;top:959.7px;font-size:11px;color:#4a4a4a;transform:scaleX(0.881)">COMMENTS</div>
<svg style="left:283px;top:961px" width="9" height="9" viewBox="0 0 9 9"><circle cx="4.5" cy="4.5" r="4.5" fill="#111"/><path d="M1.9 4.5 H7.1 M4.5 1.9 V7.1" stroke="#fff" stroke-width="1.2"/></svg>
<!-- ===== 3D model ===== -->
<svg style="left:500px;top:380px" width="1080" height="270" viewBox="500 380 1080 270">
  <defs>
    <linearGradient id="wv" x1="0" y1="0" x2="0" y2="1">
      <stop offset="0" stop-color="#834d38"/><stop offset="0.22" stop-color="#864f39"/><stop offset="0.3" stop-color="#7d4936"/>
      <stop offset="0.4" stop-color="#834c37"/><stop offset="0.55" stop-color="#804a36"/><stop offset="0.65" stop-color="#89523a"/>
      <stop offset="0.85" stop-color="#935a3e"/><stop offset="1" stop-color="#895239"/>
    </linearGradient>
    <linearGradient id="stk" x1="0" y1="0" x2="1" y2="0" gradientUnits="userSpaceOnUse" >
      <stop offset="0" stop-color="#4e2e28" stop-opacity="0.55"/><stop offset="0.6" stop-color="#4e2e28" stop-opacity="0.4"/><stop offset="1" stop-color="#4e2e28" stop-opacity="0"/>
    </linearGradient>
    <linearGradient id="wh" x1="0" y1="0" x2="1" y2="0">
      <stop offset="0" stop-color="#000" stop-opacity="0.05"/><stop offset="0.12" stop-color="#fff" stop-opacity="0.02"/>
      <stop offset="0.22" stop-color="#000" stop-opacity="0.06"/><stop offset="0.36" stop-color="#fff" stop-opacity="0.05"/>
      <stop offset="0.41" stop-color="#000" stop-opacity="0.05"/><stop offset="0.5" stop-color="#fff" stop-opacity="0.05"/>
      <stop offset="0.58" stop-color="#000" stop-opacity="0.03"/><stop offset="0.63" stop-color="#fff" stop-opacity="0.06"/>
      <stop offset="0.72" stop-color="#000" stop-opacity="0.04"/><stop offset="0.8" stop-color="#fff" stop-opacity="0.03"/>
      <stop offset="0.9" stop-color="#000" stop-opacity="0.05"/><stop offset="1" stop-color="#000" stop-opacity="0.02"/>
    </linearGradient>
    <filter id="grain" x="0" y="0" width="100%" height="100%" color-interpolation-filters="sRGB">
      <feTurbulence type="fractalNoise" baseFrequency="0.008 0.3" numOctaves="3" seed="11" result="n"/>
      <feColorMatrix in="n" type="matrix" values="0 0 0 0 0.30  0 0 0 0 0.17  0 0 0 0 0.14  0 0 0 -2.6 1.45"/>
    </filter>
    <filter id="grain2" x="0" y="0" width="100%" height="100%" color-interpolation-filters="sRGB">
      <feTurbulence type="fractalNoise" baseFrequency="0.03 0.02" numOctaves="3" seed="5" result="n"/>
      <feColorMatrix in="n" type="matrix" values="0 0 0 0 0.67  0 0 0 0 0.41  0 0 0 0 0.27  0 0 0 2.4 -0.9"/>
    </filter>
    <filter id="grain3" x="0" y="0" width="100%" height="100%" color-interpolation-filters="sRGB">
      <feTurbulence type="fractalNoise" baseFrequency="0.012 0.05" numOctaves="2" seed="21" result="n"/>
      <feColorMatrix in="n" type="matrix" values="0 0 0 0 0.36  0 0 0 0 0.20  0 0 0 0 0.16  0 0 0 2.2 -1.0"/>
    </filter>
  </defs>
  <!-- wood beam -->
  <rect x="612" y="399.5" width="856" height="40" fill="url(#wv)"/>
  <rect x="612" y="399.5" width="856" height="40" fill="url(#wh)"/>
  <rect x="612" y="399.5" width="856" height="40" filter="url(#grain)" opacity="0.38"/>
  <rect x="612" y="399.5" width="856" height="40" filter="url(#grain2)" opacity="0.6"/>
  <rect x="612" y="399.5" width="856" height="40" filter="url(#grain3)" opacity="0.4"/>
  <g fill="none" stroke-width="1.3" stroke-linecap="round">
    <path d="M613 411.4 Q650 410 690 410.2 T790 411.4 T900 410.6 T1010 412" stroke="#4e2e28" stroke-opacity="0.38"/>
    <path d="M613 421.6 Q680 422.4 740 421.2 T860 421.8 T960 420.8" stroke="#4e2e28" stroke-opacity="0.3"/>
    <path d="M700 404 Q800 403 900 404.6 T1100 403.6" stroke="#4e2e28" stroke-opacity="0.16"/>
    <path d="M1080 417 Q1180 418.6 1300 417.4 T1460 418.4" stroke="#4e2e28" stroke-opacity="0.16"/>
    <path d="M1150 429 Q1250 430.2 1350 428.8 T1466 429.6" stroke="#4e2e28" stroke-opacity="0.14"/>
  </g>
  <circle cx="914.5" cy="413.5" r="1.2" fill="#3a2018" opacity="0.8"/>
  <path d="M612 399.5 H1468 M612 439.5 H1468" stroke="#0a0a0a" stroke-width="1" fill="none"/>
  <!-- left leg -->
  <g id="leg">
    <path d="M531 389 H605.5 L612.4 396 V545.4 H524.2 V396Z" fill="#3e3e3c"/>
    <path d="M531 389 H605.5 L612.4 396 H524.2Z" fill="#47453f"/>
    <path d="M524.2 396 H531 V545.4 H524.2Z" fill="#3d3d3b"/>
    <path d="M605.5 396 H612.4 V545.4 H605.5Z" fill="#353531"/>
    <path d="M524.2 545.4 H612.4 V640 Q612.4 641.3 611 641.3 H525.6 Q524.2 641.3 524.2 640Z" fill="#d0d0c6"/>
    <path d="M524.2 545.4 H531 V641.3 H525.6 Q524.2 641.3 524.2 640Z M605.5 545.4 H612.4 V640 Q612.4 641.3 611 641.3 H605.5Z" fill="#d3d2c7"/>
    <path d="M531 389 L524.2 396 M605.5 389 L612.4 396" stroke="#0a0a0a" stroke-width="1.6" fill="none"/>
    <path d="M531.2 389.6 V395 M605.4 389.6 V395" stroke="#1c1c1a" stroke-width="1.2" fill="none"/>
    <path d="M524.6 395.9 H612" stroke="#050505" stroke-width="2.3" fill="none"/>
    <path d="M531.2 396 V641 M605.4 396 V641" stroke="#060606" stroke-width="2.3" fill="none"/>
    <path d="M524.2 545.4 H612.4" stroke="#0a0a0a" stroke-width="1.5" fill="none"/>
    <path d="M531 389 H605.5 L612.4 396 V640 Q612.4 641.3 611 641.3 H525.6 Q524.2 641.3 524.2 640 V396Z" fill="none" stroke="#050505" stroke-width="1.8" stroke-linejoin="round"/>
    <path d="M530.6 389 H606" stroke="#050505" stroke-width="2.2" fill="none"/>
  </g>
  <use href="#leg" transform="translate(943.7 0)"/>
</svg>
<!-- ===== view cube ===== -->
<svg style="left:1800px;top:150px" width="110" height="95" viewBox="1800 150 110 95">
  <defs>
    <linearGradient id="vcg" x1="0" y1="0" x2="0" y2="1"><stop offset="0" stop-color="#f3f3f3"/><stop offset="1" stop-color="#dedede"/></linearGradient>
    <linearGradient id="vcg2" x1="0" y1="0" x2="0" y2="1"><stop offset="0" stop-color="#e3e4e8"/><stop offset="1" stop-color="#d6d7db"/></linearGradient>
    <radialGradient id="vsh" cx="0.5" cy="0.5" r="0.5"><stop offset="0" stop-color="#000" stop-opacity="0.17"/><stop offset="1" stop-color="#000" stop-opacity="0"/></radialGradient>
  </defs>
  <ellipse cx="1860" cy="233.6" rx="36" ry="4.6" fill="url(#vsh)"/>
  <rect x="1830.4" y="177.7" width="52.2" height="52" fill="url(#vcg)" stroke="#8c8c8c" stroke-width="1"/>
  <rect x="1840" y="187" width="32.8" height="32.8" fill="url(#vcg2)"/>
  <path d="M1821.8 231 H1884" stroke="#f05c5c" stroke-width="2" fill="none"/>
  <path d="M1883.8 169 V232" stroke="#62ee62" stroke-width="2.1" fill="none"/>
</svg>
<div class="t" style="left:1842.9px;top:196px;font-size:14.2px;font-weight:bold;color:#979ba5;transform:scaleX(0.695)">BACK</div>
<div class="t" style="left:1880.2px;top:153.6px;font-size:14px;font-weight:bold;color:#84ee84;transform:scaleX(0.66)">Y</div>
<div class="t" style="left:1810px;top:223.8px;font-size:14px;font-weight:bold;color:#f48c8c;transform:scaleX(0.7)">X</div>
<!-- ===== navigation bar ===== -->
<div class="abs" style="left:842px;top:952px;width:237px;height:24px;background:#f2f2f2"></div>
<svg style="left:844px;top:955px" width="18" height="18" viewBox="0 0 18 18">
  <path d="M0.9 9.6 A7.8 3.3 0 0 1 16.5 9.4 A7.8 3.3 0 0 1 6.3 12.55" fill="none" stroke="#222" stroke-width="1.3"/>
  <path d="M2.8 12.5 L6.6 10.2 V14.9Z" fill="#111"/>
  <path d="M8.3 16.6 V4 H6.6 L9.4 0.8 L12.2 4 H10.5 V16.6Z" fill="#fff" stroke="#222" stroke-width="1" stroke-linejoin="round"/>
</svg>
<svg style="left:865.6px;top:962px" width="7" height="4" viewBox="0 0 7 4"><path d="M0.2 0 H6.6 L3.4 4Z" fill="#2a2a2a"/></svg>
<svg style="left:878px;top:956px" width="17" height="17" viewBox="0 0 17 17">
  <path d="M2 5.2 L5.9 0.5 L7.5 2.8 L11.7 1.2 L12.6 5.2Z" fill="#aab2be" stroke="#3a4452" stroke-width="1" stroke-linejoin="round"/>
  <rect x="0.7" y="5.3" width="15.2" height="10.3" rx="0.8" fill="#fff" stroke="#3a4452" stroke-width="1.3"/>
  <rect x="3.4" y="8.2" width="9.8" height="4.6" fill="#a4acba" stroke="#3a4452" stroke-width="1"/>
</svg>
<svg style="left:904px;top:956px" width="17" height="17" viewBox="0 0 17 17">
  <path d="M4.6 10.4 L2.4 8.6 Q1.2 7.8 0.6 8.6 Q0.2 9.4 1.2 10.4 L5 14.8 Q6 16 7.6 16 H11.4 Q12.8 16 13.4 14.4 L15.4 6.2 Q15.6 4.8 14.6 4.6 Q13.6 4.6 13.2 5.8 L12.4 8.2 L12.6 2.4 Q12.6 1.2 11.6 1.2 Q10.6 1.2 10.6 2.4 L10.2 7.4 L10 1.4 Q10 0.3 9 0.3 Q8 0.3 8 1.4 L7.8 7.4 L6.8 2.6 Q6.6 1.4 5.6 1.6 Q4.6 1.8 4.8 3 L5.8 9.6Z" fill="#fbfbfc" stroke="#364050" stroke-width="1.1" stroke-linejoin="round"/>
</svg>
<svg style="left:929px;top:955px" width="18" height="18" viewBox="0 0 18 18">
  <defs><linearGradient id="lens" x1="0" y1="0" x2="0" y2="1"><stop offset="0" stop-color="#f2f8f8"/><stop offset="1" stop-color="#c2dcdc"/></linearGradient></defs>
  <path d="M8.8 11.4 L12.4 14.8" stroke="#2a2e36" stroke-width="2.8" stroke-linecap="round"/>
  <circle cx="5.3" cy="8" r="4.2" fill="url(#lens)" stroke="#364050" stroke-width="1.4"/>
  <path d="M12.2 3 H16.8 M14.5 0.8 V5.2 M12.2 7.7 H16.8" stroke="#222" stroke-width="1.1"/>
</svg>
<svg style="left:955px;top:955px" width="18" height="18" viewBox="0 0 18 18">
  <rect x="1.5" y="1.5" width="15" height="15" fill="none" stroke="#444" stroke-width="0.9" stroke-dasharray="2.2 1.6"/>
  <path d="M12 12.2 L15.6 15.4" stroke="#222" stroke-width="2.8" stroke-linecap="round"/>
  <circle cx="7.4" cy="7.3" r="5.6" fill="url(#lens)" stroke="#222" stroke-width="1.5"/>
</svg>
<svg style="left:976.8px;top:962px" width="7" height="4" viewBox="0 0 7 4"><path d="M0.2 0 H6.6 L3.4 4Z" fill="#2a2a2a"/></svg>
<svg style="left:988px;top:955px" width="18" height="18" viewBox="0 0 18 18">
  <path d="M5.6 13.8 H12.6 L13 16.4 Q13 16.8 12.4 16.8 H5.8 Q5.2 16.8 5.2 16.4Z" fill="#fff" stroke="#666" stroke-width="0.9"/>
  <rect x="1.2" y="1.2" width="15.6" height="12.7" rx="1.4" fill="#fff" stroke="#666" stroke-width="0.9"/>
  <rect x="3.3" y="3.1" width="11.4" height="8.7" rx="1" fill="#a3bfe3" stroke="#284680" stroke-width="1.4"/>
</svg>
<svg style="left:1006.8px;top:962px" width="7" height="4" viewBox="0 0 7 4"><path d="M0.2 0 H6.6 L3.4 4Z" fill="#2a2a2a"/></svg>
<svg style="left:1020px;top:956px" width="16" height="16" viewBox="0 0 16 16">
  <defs><linearGradient id="grg" x1="0" y1="0" x2="0" y2="1"><stop offset="0" stop-color="#b2b4b8"/><stop offset="1" stop-color="#5e626a"/></linearGradient><linearGradient id="grw" x1="0" y1="0" x2="0" y2="1"><stop offset="0" stop-color="#fff"/><stop offset="1" stop-color="#ccd0d8"/></linearGradient></defs>
  <rect x="0.5" y="0.5" width="15" height="15" rx="0.8" fill="url(#grg)" stroke="#555" stroke-width="1"/>
<rect x="1.3" y="1.3" width="1.9" height="1.9" fill="url(#grw)"/><rect x="4.2" y="1.3" width="1.9" height="1.9" fill="url(#grw)"/><rect x="7.1" y="1.3" width="1.9" height="1.9" fill="url(#grw)"/><rect x="10.0" y="1.3" width="1.9" height="1.9" fill="url(#grw)"/><rect x="12.9" y="1.3" width="1.9" height="1.9" fill="url(#grw)"/><rect x="1.3" y="4.2" width="1.9" height="1.9" fill="url(#grw)"/><rect x="4.2" y="4.2" width="1.9" height="1.9" fill="url(#grw)"/><rect x="7.1" y="4.2" width="1.9" height="1.9" fill="url(#grw)"/><rect x="10.0" y="4.2" width="1.9" height="1.9" fill="url(#grw)"/><rect x="12.9" y="4.2" width="1.9" height="1.9" fill="url(#grw)"/><rect x="1.3" y="7.1" width="1.9" height="1.9" fill="url(#grw)"/><rect x="4.2" y="7.1" width="1.9" height="1.9" fill="url(#grw)"/><rect x="7.1" y="7.1" width="1.9" height="1.9" fill="url(#grw)"/><rect x="10.0" y="7.1" width="1.9" height="1.9" fill="url(#grw)"/><rect x="12.9" y="7.1" width="1.9" height="1.9" fill="url(#grw)"/><rect x="1.3" y="10.0" width="1.9" height="1.9" fill="url(#grw)"/><rect x="4.2" y="10.0" width="1.9" height="1.9" fill="url(#grw)"/><rect x="7.1" y="10.0" width="1.9" height="1.9" fill="url(#grw)"/><rect x="10.0" y="10.0" width="1.9" height="1.9" fill="url(#grw)"/><rect x="12.9" y="10.0" width="1.9" height="1.9" fill="url(#grw)"/><rect x="1.3" y="12.9" width="1.9" height="1.9" fill="url(#grw)"/><rect x="4.2" y="12.9" width="1.9" height="1.9" fill="url(#grw)"/><rect x="7.1" y="12.9" width="1.9" height="1.9" fill="url(#grw)"/><rect x="10.0" y="12.9" width="1.9" height="1.9" fill="url(#grw)"/><rect x="12.9" y="12.9" width="1.9" height="1.9" fill="url(#grw)"/>
</svg>
<svg style="left:1037.8px;top:962px" width="7" height="4" viewBox="0 0 7 4"><path d="M0.2 0 H6.6 L3.4 4Z" fill="#2a2a2a"/></svg>
<svg style="left:1051px;top:957px" width="15" height="13" viewBox="0 0 15 13">
  <g fill="#c2d6f2" stroke="#2c4a86" stroke-width="1.1"><rect x="0.6" y="0.6" width="6.6" height="5.6" rx="0.8"/><rect x="7.8" y="0.6" width="6.6" height="5.6" rx="0.8"/><rect x="0.6" y="6.8" width="6.6" height="5.6" rx="0.8"/><rect x="7.8" y="6.8" width="6.6" height="5.6" rx="0.8"/></g>
  <g fill="#a4bee4"><rect x="2.6" y="2.6" width="2.6" height="1.6"/><rect x="9.8" y="2.6" width="2.6" height="1.6"/><rect x="2.6" y="8.8" width="2.6" height="1.6"/><rect x="9.8" y="8.8" width="2.6" height="1.6"/></g>
</svg>
<svg style="left:1069px;top:962px" width="7" height="4" viewBox="0 0 7 4"><path d="M0.2 0 H6.6 L3.4 4Z" fill="#2a2a2a"/></svg>
<svg style="left:1891px;top:957px" width="17" height="17" viewBox="0 0 17 17">
  <path d="M8.4 0.2 Q16.6 0.2 16.6 8.4 V16.6 H8.4 Q0.2 16.6 0.2 8.4 Q0.2 0.2 8.4 0.2Z" fill="#050505"/>
  <path d="M3.6 9 L9.6 5.2 M4.4 10.4 L11.6 5.8 M6.4 10.8 L12 7.2 M9.6 5.2 L12.2 10.8 M8.6 8.2 L10.4 11" stroke="#fff" stroke-width="0.8" fill="none"/>
</svg>
<!-- ===== timeline ===== -->
<svg width="0" height="0" style="position:absolute"><defs>
  <symbol id="t-S" viewBox="0 0 16 16">
    <path d="M1 1 H14 M1 1 V14 M14 1 V7 M1 14 H9" stroke="#bcbcbc" stroke-width="0.9" fill="none"/>
    <path d="M4.6 4.5 H10 M4.4 4.6 V10.4" stroke="#9a9a9a" stroke-width="0.9" fill="none" stroke-dasharray="2 1"/>
    <path d="M11 5.2 Q10.4 9.8 5.2 10.6" stroke="#666" stroke-width="0.9" fill="none"/>
    <g fill="#2f9bf2"><rect x="0.1" y="0.1" width="1.8" height="1.8"/><rect x="13.1" y="0.1" width="1.8" height="1.8"/><rect x="0.1" y="13.1" width="1.8" height="1.8"/>
    <rect x="3.5" y="3.6" width="1.8" height="1.8"/><rect x="9.9" y="3.6" width="1.8" height="1.8"/><rect x="3.5" y="9.7" width="1.8" height="1.8"/></g>
    <path d="M9.4 12.8 L13.4 8.8 L15.4 10.8 L11.4 14.8Z" fill="#f3b431"/>
    <path d="M13.4 8.8 L14.4 7.7 Q15 7.2 15.6 7.8 L16.3 8.6 Q16.8 9.2 16.3 9.8 L15.4 10.8Z" fill="#f23c3c"/>
    <path d="M9.4 12.8 L11.4 14.8 L8.4 15.8Z" fill="#444"/>
  </symbol>
  <symbol id="t-E" viewBox="0 0 16 16">
    <path d="M0.3 13 H9.6 V16 H0.3Z" fill="#c6c6c6"/><path d="M9.6 13 L13 9.8 V12.8 L9.6 16Z" fill="#a9a9a9"/>
    <path d="M0.3 3.6 H9.6 V13 H0.3Z" fill="#6bb1e4"/><path d="M0.3 3.6 L3.4 0 H13 L9.6 3.6Z" fill="#8ecbf8"/><path d="M9.6 3.6 L13 0 V10 L9.6 13.2Z" fill="#4a93cb"/>
    <path d="M14.4 2 V12.6" stroke="#333" stroke-width="0.9"/><path d="M13.2 3.2 L14.4 0.8 L15.6 3.2Z" fill="#222"/>
  </symbol>
  <symbol id="t-B" viewBox="0 0 16 16">
    <path d="M6.4 0.2 H16 L12.4 4.4 H2.8Z" fill="#8ecbf8"/><path d="M16 0.2 V8.6 L12.8 11.4 V4Z" fill="#4a93cb"/><path d="M3.4 4.2 H12.8 V8 H3.4Z" fill="#6bb1e4"/>
    <rect x="0.5" y="3.5" width="12.4" height="12.2" fill="#f4f4f4" stroke="#7c7c7c" stroke-width="0.8"/>
    <path d="M3.6 4.3 L6 3.9 H12 L11 5.2 H4Z" fill="#8ecbf8"/><path d="M11 5.2 L12.6 3.9 V11 L11 12.4Z" fill="#4a93cb"/>
    <rect x="2.7" y="5.6" width="8.2" height="8" rx="1.4" fill="#fff" stroke="#6a6a6a" stroke-width="0.9"/>
  </symbol>
  <symbol id="t-P" viewBox="0 0 16 16">
    <path d="M1.2 10.6 H12.2 V15.6 H1.2Z" fill="#dcdcdc"/><path d="M12.2 10.6 L15.2 7.6 V12.6 L12.2 15.6Z" fill="#bdbdbd"/>
    <path d="M1.2 10.6 V15.6 H12.2 L15.2 12.6 V8" fill="none" stroke="#6a6a6a" stroke-width="0.9"/>
    <path d="M1.2 3.4 L4.2 0.1 H15.2 L12.2 3.4Z" fill="#8ecbf8"/><path d="M12.2 3.4 L15.2 0.1 V5 L12.2 8Z" fill="#4a93cb"/><path d="M1.2 3.4 H12.2 V8 H1.2Z" fill="#6bb1e4"/>
    <path d="M0 9.4 H12.4 L16 5.6" fill="none" stroke="#fafafa" stroke-width="2"/>
    <path d="M0 9.4 H12.4 L16 5.6" fill="none" stroke="#4aa2ee" stroke-width="0.9"/>
  </symbol>
  <symbol id="t-C" viewBox="0 0 16 16">
    <path d="M5.3 3.4 L7.5 0.2 H16 L14 3.4Z" fill="#8ecbf8"/><path d="M14 3.3 L16 0.2 V8.5 L14 10.8Z" fill="#4a93cb"/>
    <path d="M0 8.6 L2 6.2 H5.4 V8.6Z" fill="#8ecbf8"/><path d="M9 10.7 H11 V13.5 L9 16Z" fill="#4a93cb"/>
    <path d="M0 8.5 H5.3 V3.3 H14 V10.8 H9 V16 H0Z" fill="#6bb1e4"/>
  </symbol>
  <symbol id="t-H" viewBox="0 0 16 16">
    <path d="M7.5 0.4 H12.5 L15.8 3.8 H10.3Z" fill="#fafafa"/>
    <path d="M0.3 6.7 L3.4 10.1 H4.3 V15.6 L0.3 12Z" fill="#eeeeee"/>
    <path d="M10.3 3.8 H15.8 V15.6 H4.3 V10.1 H3.4Z" fill="#dcdcdc"/>
    <path d="M0.3 6.7 L7.5 0.4 H12.5 L15.8 3.8 V15.6 H4.3 L0.3 12Z" fill="none" stroke="#7a7a7a" stroke-width="0.9" stroke-linejoin="round"/>
    <path d="M0.3 6.7 L7.5 0.3 L10.4 3.6 L3.4 10.2Z" fill="#62aae2"/>
  </symbol>
  <symbol id="t-F" viewBox="0 0 16 16">
    <path d="M0.4 4 L4 0.4 H9.2 L6.2 3.8Z" fill="#fafafa"/>
    <path d="M0.4 3.9 H6.2 Q11.8 4.5 12.4 9.9 V15.6 H0.4Z" fill="#dcdcdc"/>
    <path d="M12.4 9.9 L15.9 7 V12.6 L12.4 15.6Z" fill="#bdbdbd"/>
    <path d="M8.6 0.4 H4 L0.4 4 V15.6 H12.4 L15.9 12.6 V7.4" fill="none" stroke="#7a7a7a" stroke-width="0.9" stroke-linejoin="round"/>
    <path d="M6.2 3.5 L9.2 0.2 Q15.3 0.9 15.9 7 L12.6 9.9 Q12 4.3 6.2 3.5Z" fill="#62aae2"/>
  </symbol>
  <symbol id="t-M" viewBox="0 0 16 16">
    <defs><linearGradient id="cyl" x1="0" y1="0" x2="1" y2="0"><stop offset="0" stop-color="#f4f4f6"/><stop offset="0.55" stop-color="#c4c6cc"/><stop offset="1" stop-color="#ececee"/></linearGradient></defs>
    <rect x="1.6" y="0.6" width="5.8" height="6.8" rx="1.9" fill="url(#cyl)" stroke="#646464" stroke-width="0.95"/>
    <rect x="8.6" y="7.8" width="5.8" height="6.8" rx="1.9" fill="url(#cyl)" stroke="#646464" stroke-width="0.95"/>
    <path d="M2.8 9 V11.6 H5.6" fill="none" stroke="#4a8cf0" stroke-width="1"/><path d="M5 10 L7 11.6 L5 13.2Z" fill="#4a8cf0"/>
  </symbol>
  <symbol id="t-K" viewBox="0 0 16 16">
    <path d="M0.5 5.6 Q0.5 5 1 4.4 L4.2 0.9 Q4.8 0.4 5.6 0.4 H8.4 L4.6 5 V15.4 H1.4 Q0.5 15.4 0.5 14.6Z" fill="#e4e4e4" stroke="#8a8a8a" stroke-width="0.9" stroke-linejoin="round"/>
    <path d="M1 5.2 L4.6 1 H8.2 L4.6 5Z" fill="#fcfcfc"/>
    <path d="M5.1 4.8 L9.6 0.2 V10.4 L5.1 15.1Z" fill="#5bc27c"/>
    <path d="M11.1 4.8 L15.7 0.2 V10.4 L11.1 15.1Z" fill="#e69a66"/>
  </symbol>
  <symbol id="t-T" viewBox="0 0 16 16">
    <path d="M0.6 14.4 L7.3 1.3 V14.4Z" fill="#fff" stroke="#8a8a8a" stroke-width="0.9" stroke-linejoin="round"/>
    <path d="M6.9 2.2 H8 V14.8 H6.9Z" fill="#cfcfcf"/>
    <path d="M7.9 1 L14.9 14.8 H7.9Z" fill="#5aa8e4"/>
  </symbol>
</defs></svg>
<svg style="left:10px;top:999px" width="114" height="16" viewBox="10 999 114 16" fill="#666">
  <rect x="10.9" y="1000.9" width="2.1" height="12"/><path d="M13.5 1006.9 L22 1001.4 V1012.6Z"/>
  <path d="M35.4 1006.9 L45.1 1000.9 V1013Z"/><rect x="46.3" y="1004.6" width="1.8" height="5.2"/>
  <path d="M61.1 999.2 L72.9 1006.6 L61.1 1014.1Z"/>
  <rect x="85" y="1004.6" width="1.8" height="5.2"/><path d="M88.1 1000.9 L97.7 1006.9 L88.1 1013Z"/>
  <path d="M110.9 1001.4 L119.6 1006.9 L110.9 1012.6Z"/><rect x="120" y="1000.9" width="2.1" height="12"/>
</svg>
<svg style="left:0;top:1010px" width="1300" height="20" viewBox="0 1010 1300 20"><path d="M154.1 1022.9 H1186.9 M155 1017.2 V1022.9 M178 1017.2 V1022.9 M202 1017.2 V1022.9 M226 1017.2 V1022.9 M250 1017.2 V1022.9 M274 1017.2 V1022.9 M298 1017.2 V1022.9 M322 1017.2 V1022.9 M346 1017.2 V1022.9 M370 1017.2 V1022.9 M394 1017.2 V1022.9 M418 1017.2 V1022.9 M442 1017.2 V1022.9 M466 1017.2 V1022.9 M490 1017.2 V1022.9 M514 1017.2 V1022.9 M538 1017.2 V1022.9 M562 1017.2 V1022.9 M586 1017.2 V1022.9 M610 1017.2 V1022.9 M634 1017.2 V1022.9 M658 1017.2 V1022.9 M682 1017.2 V1022.9 M706 1017.2 V1022.9 M730 1017.2 V1022.9 M754 1017.2 V1022.9 M778 1017.2 V1022.9 M802 1017.2 V1022.9 M826 1017.2 V1022.9 M850 1017.2 V1022.9 M874 1017.2 V1022.9 M898 1017.2 V1022.9 M922 1017.2 V1022.9 M946 1017.2 V1022.9 M970 1017.2 V1022.9 M994 1017.2 V1022.9 M1018 1017.2 V1022.9 M1042 1017.2 V1022.9 M1066 1017.2 V1022.9 M1090 1017.2 V1022.9 M1114 1017.2 V1022.9 M1138 1017.2 V1022.9 M1162 1017.2 V1022.9 M1186 1017.2 V1022.9" stroke="#c9c9c9" stroke-width="1.9" fill="none"/></svg>
<svg style="left:146px;top:998px" width="16" height="16"><use href="#t-S"/></svg>
<svg style="left:170px;top:998px" width="16" height="16"><use href="#t-E"/></svg>
<svg style="left:194px;top:998px" width="16" height="16"><use href="#t-E"/></svg>
<svg style="left:218px;top:998px" width="16" height="16"><use href="#t-S"/></svg>
<svg style="left:242px;top:998px" width="16" height="16"><use href="#t-E"/></svg>
<svg style="left:266px;top:998px" width="16" height="16"><use href="#t-S"/></svg>
<svg style="left:290px;top:998px" width="16" height="16"><use href="#t-B"/></svg>
<svg style="left:314px;top:998px" width="16" height="16"><use href="#t-P"/></svg>
<svg style="left:338px;top:998px" width="16" height="16"><use href="#t-S"/></svg>
<svg style="left:362px;top:998px" width="16" height="16"><use href="#t-E"/></svg>
<svg style="left:386px;top:998px" width="16" height="16"><use href="#t-C"/></svg>
<svg style="left:410px;top:998px" width="16" height="16"><use href="#t-H"/></svg>
<svg style="left:434px;top:998px" width="16" height="16"><use href="#t-S"/></svg>
<svg style="left:458px;top:998px" width="16" height="16"><use href="#t-E"/></svg>
<svg style="left:482px;top:998px" width="16" height="16"><use href="#t-M"/></svg>
<svg style="left:506px;top:998px" width="16" height="16"><use href="#t-C"/></svg>
<svg style="left:530px;top:998px" width="16" height="16"><use href="#t-B"/></svg>
<svg style="left:554px;top:998px" width="16" height="16"><use href="#t-E"/></svg>
<svg style="left:578px;top:998px" width="16" height="16"><use href="#t-E"/></svg>
<svg style="left:602px;top:998px" width="16" height="16"><use href="#t-E"/></svg>
<svg style="left:626px;top:998px" width="16" height="16"><use href="#t-S"/></svg>
<svg style="left:650px;top:998px" width="16" height="16"><use href="#t-E"/></svg>
<svg style="left:674px;top:998px" width="16" height="16"><use href="#t-E"/></svg>
<svg style="left:698px;top:998px" width="16" height="16"><use href="#t-B"/></svg>
<svg style="left:722px;top:998px" width="16" height="16"><use href="#t-P"/></svg>
<svg style="left:746px;top:998px" width="16" height="16"><use href="#t-S"/></svg>
<svg style="left:770px;top:998px" width="16" height="16"><use href="#t-E"/></svg>
<svg style="left:794px;top:998px" width="16" height="16"><use href="#t-C"/></svg>
<svg style="left:818px;top:998px" width="16" height="16"><use href="#t-H"/></svg>
<svg style="left:842px;top:998px" width="16" height="16"><use href="#t-H"/></svg>
<svg style="left:866px;top:998px" width="16" height="16"><use href="#t-F"/></svg>
<svg style="left:890px;top:998px" width="16" height="16"><use href="#t-S"/></svg>
<svg style="left:914px;top:998px" width="16" height="16"><use href="#t-E"/></svg>
<svg style="left:938px;top:998px" width="16" height="16"><use href="#t-H"/></svg>
<svg style="left:962px;top:998px" width="16" height="16"><use href="#t-B"/></svg>
<svg style="left:986px;top:998px" width="16" height="16"><use href="#t-H"/></svg>
<svg style="left:1010px;top:998px" width="16" height="16"><use href="#t-S"/></svg>
<svg style="left:1034px;top:998px" width="16" height="16"><use href="#t-E"/></svg>
<svg style="left:1058px;top:998px" width="16" height="16"><use href="#t-H"/></svg>
<svg style="left:1082px;top:998px" width="16" height="16"><use href="#t-S"/></svg>
<svg style="left:1106px;top:998px" width="16" height="16"><use href="#t-E"/></svg>
<svg style="left:1130px;top:998px" width="16" height="16"><use href="#t-E"/></svg>
<svg style="left:1154px;top:998px" width="16" height="16"><use href="#t-K"/></svg>
<svg style="left:1178px;top:998px" width="16" height="16"><use href="#t-T"/></svg>
<svg style="left:1190px;top:990px" width="16" height="36" viewBox="1190 990 16 36"><path d="M1191.9 992.2 H1204.1 V995.9 L1199.1 1000.6 V1023.8 H1196.9 V1000.6 L1191.9 995.9Z" fill="#5a5a5a"/></svg>
<svg style="left:1891px;top:998.8px" width="15" height="15" viewBox="-7.5 -7.5 15 15"><g fill="#7e7e7e"><circle r="5.4"/><rect x="-1.5" y="-7.5" width="3" height="3.4" transform="rotate(0)"/><rect x="-1.5" y="-7.5" width="3" height="3.4" transform="rotate(45)"/><rect x="-1.5" y="-7.5" width="3" height="3.4" transform="rotate(90)"/><rect x="-1.5" y="-7.5" width="3" height="3.4" transform="rotate(135)"/><rect x="-1.5" y="-7.5" width="3" height="3.4" transform="rotate(180)"/><rect x="-1.5" y="-7.5" width="3" height="3.4" transform="rotate(225)"/><rect x="-1.5" y="-7.5" width="3" height="3.4" transform="rotate(270)"/><rect x="-1.5" y="-7.5" width="3" height="3.4" transform="rotate(315)"/></g><circle r="2.6" fill="#f2f2f2"/></svg>
</body>
</html>
